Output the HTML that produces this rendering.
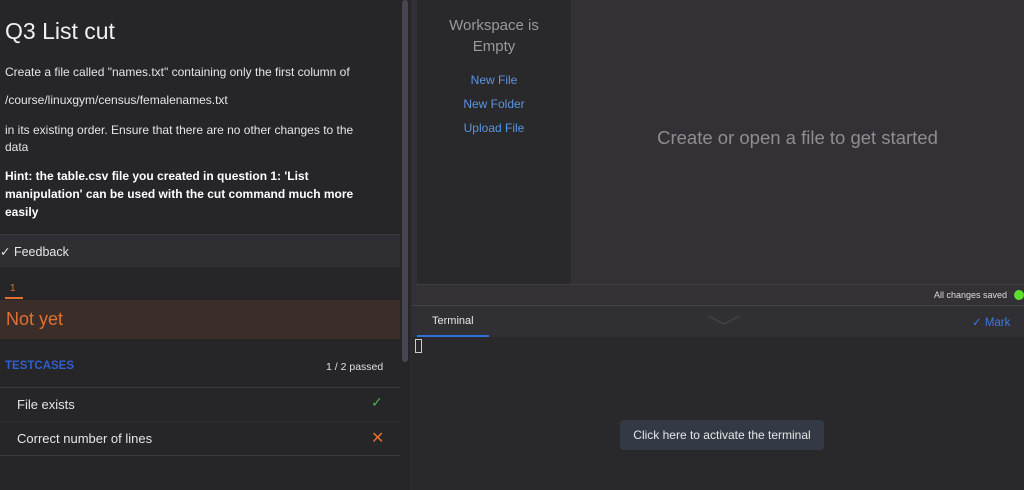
<!DOCTYPE html>
<html><head><style>
body{margin:0;width:1024px;height:490px;background:#262528;font-family:"Liberation Sans",sans-serif;position:relative;overflow:hidden;color:#e8e8e8}
div{position:absolute;box-sizing:border-box}
.s{font-size:12px;color:#e6e6e6}
</style></head><body>
<div style="left:0;top:0;width:401px;height:490px;background:#262528"></div>
<div style="left:5px;top:18px;font-size:23px;color:#f0f0f0">Q3 List cut</div>
<div class="s" style="left:5px;top:65px">Create a file called "names.txt" containing only the first column of</div>
<div class="s" style="left:5px;top:93px">/course/linuxgym/census/femalenames.txt</div>
<div class="s" style="left:5px;top:122px;width:370px;line-height:17px">in its existing order. Ensure that there are no other changes to the data</div>
<div class="s" style="left:5px;top:167px;width:370px;line-height:18px;font-weight:bold;color:#fff">Hint: the table.csv file you created in question 1: 'List manipulation' can be used with the cut command much more easily</div>
<div style="left:0;top:234px;width:400px;height:33px;background:#2f2e32;border-top:1px solid #3a393d"></div>
<div class="s" style="left:0;top:244px;font-size:12.5px">✓ Feedback</div>
<div style="left:10px;top:283px;font-size:10px;color:#e07030">1</div>
<div style="left:5px;top:297px;width:18px;height:2px;background:#e07030"></div>
<div style="left:0;top:300px;width:400px;height:39px;background:#3b2e2a"></div>
<div style="left:6px;top:309px;font-size:18px;color:#e07030">Not yet</div>
<div style="left:5px;top:360px;font-size:11.5px;font-weight:bold;color:#2f5fd0">TESTCASES</div>
<div style="left:326px;top:361px;font-size:10.5px;color:#e0e0e0">1 / 2 passed</div>
<div style="left:0;top:387px;width:400px;height:1px;background:#3a393d"></div>
<div class="s" style="left:17px;top:397px;font-size:13px">File exists</div>
<div style="left:371px;top:394px;color:#4caf50;font-size:14px">✓</div>
<div style="left:0;top:421px;width:400px;height:1px;background:#2e2d31"></div>
<div style="left:-4px;top:430px;color:#666;font-size:13px">›</div>
<div class="s" style="left:17px;top:431px;font-size:13px">Correct number of lines</div>
<div style="left:371px;top:428px;color:#e07030;font-size:16px">✕</div>
<div style="left:0;top:455px;width:400px;height:1px;background:#3a393d"></div>
<div style="left:402px;top:0;width:6px;height:362px;background:#4a4552;border-radius:3px"></div>
<div style="left:410px;top:0;width:2px;height:490px;background:#2c2b2f"></div>
<div style="left:412px;top:0;width:612px;height:305px;background:#333136"></div>
<div style="left:417px;top:0;width:154px;height:284px;background:#29282b"></div>
<div style="left:416px;top:284px;width:608px;height:1px;background:#3e3d42"></div>
<div style="left:417px;top:15px;width:154px;text-align:center;font-size:15px;color:#9a9a9a;line-height:21px">Workspace is<br>Empty</div>
<div style="left:417px;top:68px;width:154px;text-align:center;font-size:12px;color:#5b95e0;line-height:24px">New File<br>New Folder<br>Upload File</div>
<div style="left:571px;top:127px;width:453px;text-align:center;font-size:18.5px;color:#8e8e8e">Create or open a file to get started</div>
<div style="left:934px;top:290px;font-size:9px;color:#ddd">All changes saved</div>
<div style="left:1014px;top:290px;width:10px;height:10px;border-radius:5px;background:#5cdc2c"></div>
<div style="left:412px;top:305px;width:612px;height:1px;background:#44434a"></div>
<div style="left:412px;top:306px;width:612px;height:31px;background:#302f33"></div>
<div style="left:432px;top:315px;font-size:11px;color:#e6e6e6">Terminal</div>
<div style="left:417px;top:335px;width:72px;height:2px;background:#2f6fe0"></div>
<svg style="position:absolute;left:706px;top:314px" width="36" height="12"><path d="M2 2 L18 10 L34 2" stroke="#4a4950" fill="none"/></svg>
<div style="left:972px;top:315px;font-size:11.5px;color:#3a7ae0">✓ Mark</div>
<div style="left:412px;top:337px;width:612px;height:153px;background:#29282b"></div>
<div style="left:415px;top:339px;width:7px;height:14px;border:1px solid #ccc"></div>
<div style="left:620px;top:420px;width:204px;height:30px;background:#333a46;border-radius:4px;font-size:12px;color:#e6e6e6;text-align:center;line-height:30px">Click here to activate the terminal</div>
</body></html>
